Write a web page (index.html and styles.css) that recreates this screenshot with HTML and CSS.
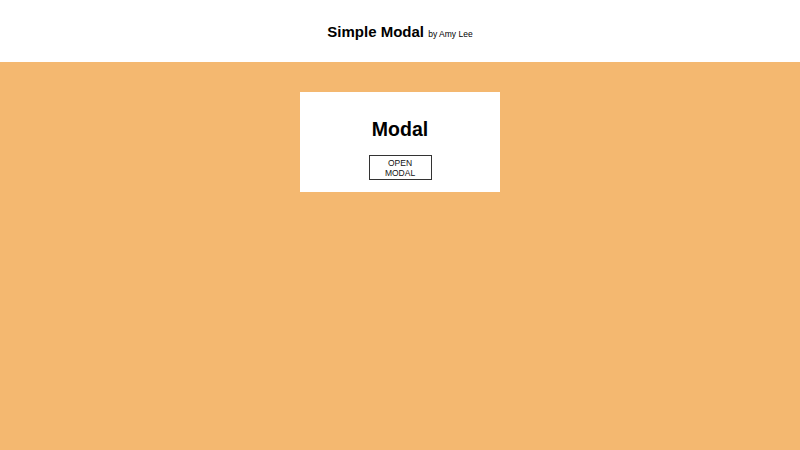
FILE: index.html
```html
<!DOCTYPE html>
<html lang="en">

<head>
    <meta charset="UTF-8">
    <meta name="viewport" content="width=device-width, initial-scale=1.0">
    <title>Simple Modal</title>
    <link rel="stylesheet" href="styles.css">
</head>

<body>
    <header class="site-header">
        <h1>Simple Modal <small>by Amy Lee</small></h1>
    </header>

    <main class="stage">
        <div class="card">
            <h2>Modal</h2>
            <button class="open-btn" type="button">OPEN MODAL</button>
        </div>
    </main>
</body>

</html>
```

FILE: styles.css
```css
body {
    font-family: "Liberation Sans", Arial, sans-serif;
    margin: 0;
    background-color: #f4b870;
    min-height: 450px;
    color: #000;
}

.site-header {
    background-color: #fff;
    height: 62px;
    display: flex;
    align-items: center;
    justify-content: center;
}

.site-header h1 {
    margin: 0;
    font-size: 15px;
    font-weight: bold;
}

.site-header small {
    font-size: 8.5px;
    font-weight: normal;
}

.stage {
    display: flex;
    justify-content: center;
    padding-top: 30px;
}

.card {
    background-color: #fff;
    width: 200px;
    height: 100px;
    box-sizing: border-box;
    display: flex;
    flex-direction: column;
    align-items: center;
    padding-top: 26px;
}

.card h2 {
    margin: 0 0 14px 0;
    font-size: 19.5px;
    font-weight: bold;
}

.open-btn {
    width: 63px;
    height: 25px;
    padding: 0 10px;
    background-color: #fff;
    border: 1px solid #333;
    font-family: "Liberation Sans", Arial, sans-serif;
    font-size: 8.5px;
    line-height: 10px;
    color: #111;
    cursor: pointer;
}
```
